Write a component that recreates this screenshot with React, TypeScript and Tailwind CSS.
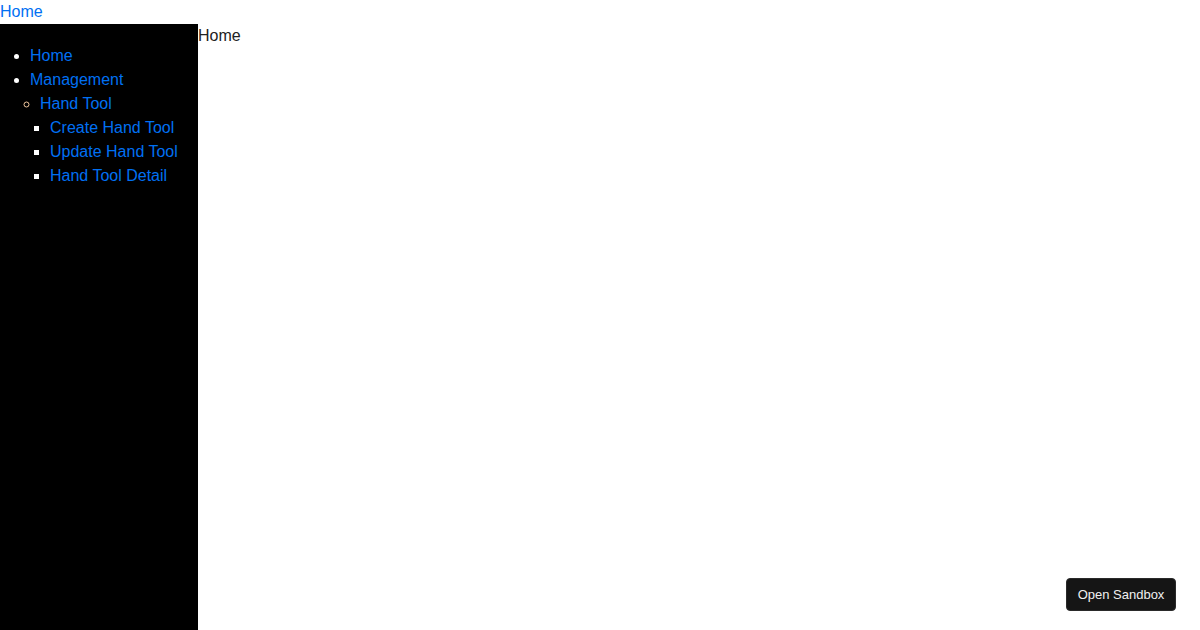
import React from "react";

export default function App() {
  const link = "text-[#0070f3] no-underline";
  return (
    <div className="font-['Liberation_Sans',Arial,sans-serif] text-[16px] leading-[24px] text-[#222] bg-white min-h-[630px]">
      <div className="h-[24px] leading-[23px]">
        <a href="#" className={link}>Home</a>
      </div>
      <div className="flex h-[606px]">
        <div className="w-[198px] bg-black text-white">
          <ul className="list-disc pl-[30px] mt-[20px]">
            <li><a href="#" className={link}>Home</a></li>
            <li>
              <a href="#" className={link}>Management</a>
              <ul className="list-[circle] pl-[10px] marker:text-[#f3c9a0]">
                <li>
                  <a href="#" className={link}>Hand Tool</a>
                  <ul className="list-[square] pl-[10px] marker:text-white">
                    <li><a href="#" className={link}>Create Hand Tool</a></li>
                    <li><a href="#" className={link}>Update Hand Tool</a></li>
                    <li><a href="#" className={link}>Hand Tool Detail</a></li>
                  </ul>
                </li>
              </ul>
            </li>
          </ul>
        </div>
        <div className="flex-1">Home</div>
      </div>
      <button className="fixed right-[24px] bottom-[19px] h-[33px] w-[110px] rounded-[4px] bg-[#151515] text-[#f0f0f0] text-[13px] leading-[31px] border border-[#2a2a2a]">
        Open Sandbox
      </button>
    </div>
  );
}
